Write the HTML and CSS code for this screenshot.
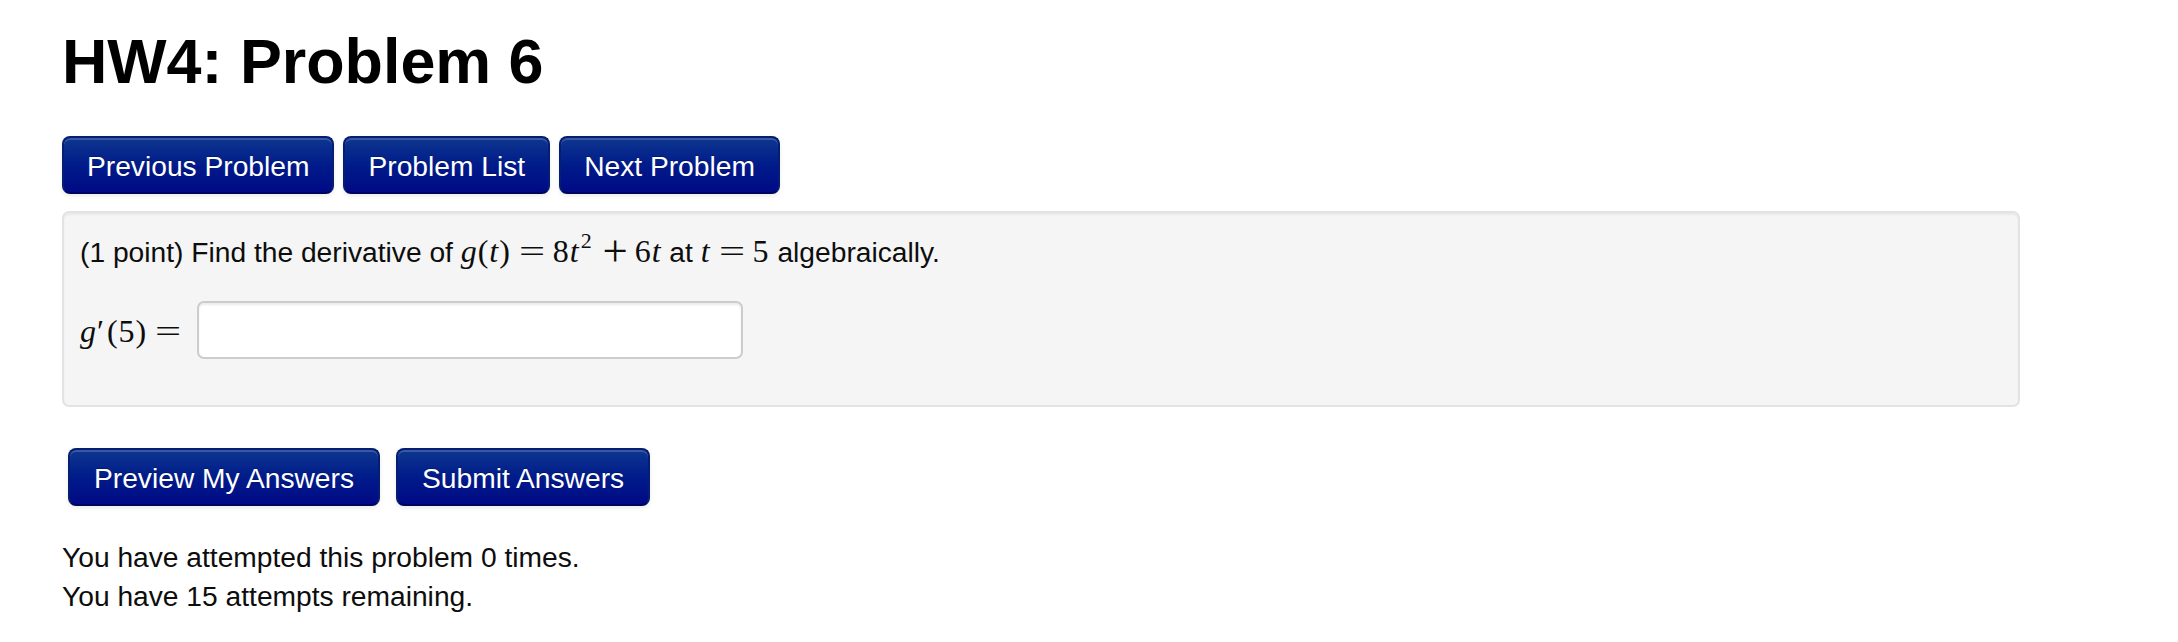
FILE: index.html
```html
<!DOCTYPE html>
<html lang="en">
<head>
<meta charset="utf-8">
<title>HW4: Problem 6</title>
<link rel="stylesheet" href="styles.css">
</head>
<body>
<div class="page">
  <h1 class="title">HW4: Problem 6</h1>
  <div class="nav">
    <a class="btn">Previous Problem</a>
    <a class="btn">Problem List</a>
    <a class="btn">Next Problem</a>
  </div>
  <div class="problem">
    <p class="statement">(1 point) Find the derivative of <span class="math"><span class="mi">g</span><span class="mo">(</span><span class="mi">t</span><span class="mo">)</span><span class="rel">=</span><span class="mn">8</span><span class="mi">t</span><span class="sup">2</span><span class="bin">+</span><span class="mn">6</span><span class="mi">t</span></span> at <span class="math"><span class="mi">t</span><span class="rel">=</span><span class="mn">5</span></span> algebraically.</p>
    <div class="answer-row">
      <span class="label"><span class="math"><span class="mi">g</span><span class="prime">&#8242;</span><span class="mo">(</span><span class="mn">5</span><span class="mo">)</span><span class="rel">=</span></span></span>
      <input class="answer" type="text" aria-label="g'(5)">
    </div>
  </div>
  <div class="submit-row">
    <button class="btn" type="button">Preview My Answers</button>
    <button class="btn" type="button">Submit Answers</button>
  </div>
  <p class="attempts">You have attempted this problem 0 times.<br>You have 15 attempts remaining.</p>
</div>
</body>
</html>
```
FILE: styles.css
```css
html, body {
  margin: 0;
  padding: 0;
  background: #ffffff;
}

body {
  font-family: "Liberation Sans", Arial, Helvetica, sans-serif;
  font-size: 28.2px;
  line-height: 38.4px;
  color: #0d0d0d;
}

.page {
  padding: 25px 0 0 62px;
}

.title {
  margin: 0;
  font-size: 62.8px;
  line-height: 72px;
  font-weight: bold;
  color: #000;
}

.nav {
  display: flex;
  gap: 9px;
  margin-top: 39px;
}

.btn {
  display: inline-block;
  box-sizing: border-box;
  font-family: "Liberation Sans", Arial, Helvetica, sans-serif;
  font-size: 28.2px;
  line-height: 38.4px;
  color: #ffffff;
  padding: 9px 23px 7px;
  border: 2px solid #051d72;
  border-bottom-color: #00055e;
  border-radius: 8px;
  background: linear-gradient(to bottom, #0e368f 0%, #001b8a 50%, #000a85 100%);
  box-shadow: inset 0 2px 0 rgba(255, 255, 255, 0.18), 0 2px 4px rgba(0, 0, 0, 0.08);
  text-shadow: 0 -1px 0 rgba(0, 0, 0, 0.25);
  cursor: pointer;
  white-space: nowrap;
}

.problem {
  box-sizing: border-box;
  width: 1958px;
  margin-top: 17px;
  padding: 20px 16px 46px;
  background: #f5f5f5;
  border: 2px solid #e3e3e3;
  border-radius: 7px;
  box-shadow: inset 0 2px 2px rgba(0, 0, 0, 0.05);
}

.statement {
  margin: 0;
}

.math {
  font-family: "Liberation Serif", "Times New Roman", serif;
  font-size: 32px;
  line-height: 0;
  letter-spacing: 0.03em;
  white-space: nowrap;
}

.mi {
  font-style: italic;
}

.rel,
.bin {
  display: inline-block;
  letter-spacing: 0;
  line-height: 0;
}

.rel {
  margin: 0 12px;
  transform: scaleX(1.45);
}

.bin {
  margin: 0 11px 0 13px;
  transform: scale(1.4);
}

.sup {
  font-size: 22px;
  vertical-align: 14px;
  line-height: 0;
  margin-left: 1px;
}

.prime {
  margin-right: 2px;
}

.answer-row {
  display: flex;
  align-items: center;
  margin-top: 29px;
}

.label {
  padding-top: 4px;
}

.label .rel {
  margin-right: 0;
}

.answer {
  box-sizing: border-box;
  width: 546px;
  height: 58px;
  margin-left: 20px;
  padding: 6px 12px;
  background: #ffffff;
  border: 2px solid #cccccc;
  border-radius: 7px;
  box-shadow: inset 0 2px 2px rgba(0, 0, 0, 0.075);
  font-family: "Liberation Sans", Arial, sans-serif;
  font-size: 27.6px;
  outline: none;
}

.submit-row {
  display: flex;
  gap: 16px;
  margin: 41px 0 0 6px;
}

.submit-row .btn {
  padding-left: 24px;
  padding-right: 24px;
}

.attempts {
  margin: 32px 0 0;
}
```
